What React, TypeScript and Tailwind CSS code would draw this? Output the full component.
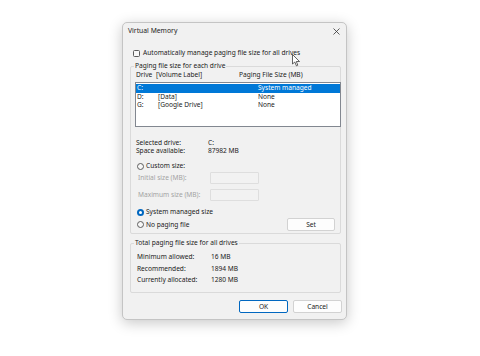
import React from "react";

const font = { fontFamily: '"Segoe UI", "Noto Sans", "Open Sans", sans-serif' };

function Radio({ checked }: { checked?: boolean }) {
  return checked ? (
    <span className="w-[7px] h-[7px] rounded-full bg-[#0067c0] flex items-center justify-center shrink-0">
      <span className="w-[3px] h-[3px] rounded-full bg-white" />
    </span>
  ) : (
    <span className="w-[7px] h-[7px] rounded-full border border-[#5c5c5c] bg-[#f7f7f7] shrink-0" />
  );
}

export default function App() {
  return (
    <div
      className="w-[480px] h-[356px] bg-white overflow-hidden pt-[22px] pl-[122px] text-[6.6px] leading-[8px] text-[#1a1a1a] relative"
      style={font}
    >
      <div className="w-[225px] h-[298px] bg-[#f1f1f1] border border-[#c4c4c4] rounded-[5px] shadow-[0_3px_14px_rgba(0,0,0,0.22)] flex flex-col">
        {/* Title bar */}
        <div className="h-[16px] flex items-center justify-between pl-[5px] pr-[5px]">
          <span className="text-[6.8px]">Virtual Memory</span>
          <svg width="7" height="7" viewBox="0 0 7 7" className="mr-[1px]">
            <path d="M0.5 0.5 L6.5 6.5 M6.5 0.5 L0.5 6.5" stroke="#333" strokeWidth="0.8" />
          </svg>
        </div>
        {/* Checkbox row */}
        <div className="mt-[10px] h-[8px] flex items-center pl-[10px] gap-[3px]">
          <span className="w-[7px] h-[7px] rounded-[1.5px] border border-[#5c5c5c] bg-[#f7f7f7]" />
          <span>Automatically manage paging file size for all drives</span>
        </div>
        {/* Groupbox 1 */}
        <div className="mt-[9px] ml-[7px] w-[211px] h-[168px] border border-[#dadada] rounded-[2px] relative flex flex-col pb-[2px]">
          <span className="absolute left-[3px] top-[-5px] px-[1px] bg-[#f1f1f1] leading-[8px]">
            Paging file size for each drive
          </span>
          <div className="mt-[4px] h-[8px] flex pl-[5px]">
            <span className="w-[20px]">Drive</span>
            <span className="w-[83px]">[Volume Label]</span>
            <span>Paging File Size (MB)</span>
          </div>
          <div className="mt-[3px] ml-[4px] w-[206px] h-[45px] border border-[#828790] bg-white pt-[1px]">
            <div className="h-[8.5px] flex items-center bg-[#0078d7] text-white">
              <span className="w-[122px] pl-[1px]">C:</span>
              <span>System managed</span>
            </div>
            <div className="h-[8.5px] flex items-center">
              <span className="w-[22px] pl-[1px]">D:</span>
              <span className="w-[100px]">[Data]</span>
              <span>None</span>
            </div>
            <div className="h-[8.5px] flex items-center">
              <span className="w-[22px] pl-[1px]">G:</span>
              <span className="w-[100px]">[Google Drive]</span>
              <span>None</span>
            </div>
          </div>
          <div className="mt-[12px] h-[8px] flex pl-[5px]">
            <span className="w-[72px]">Selected drive:</span>
            <span>C:</span>
          </div>
          <div className="h-[8px] flex pl-[5px]">
            <span className="w-[72px]">Space available:</span>
            <span>87982 MB</span>
          </div>
          <div className="mt-[7px] h-[8px] flex items-center pl-[6px] gap-[2px]">
            <Radio />
            <span>Custom size:</span>
          </div>
          <div className="mt-[2px] h-[12px] flex items-center pl-[7px] text-[#a3a3a3]">
            <span className="w-[72px]">Initial size (MB):</span>
            <span className="w-[49px] h-[12px] border border-[#dedede] bg-[#f2f2f2] rounded-[1px]" />
          </div>
          <div className="mt-[5px] h-[12px] flex items-center pl-[7px] text-[#a3a3a3]">
            <span className="w-[72px]">Maximum size (MB):</span>
            <span className="w-[49px] h-[12px] border border-[#dedede] bg-[#f2f2f2] rounded-[1px]" />
          </div>
          <div className="mt-[7px] h-[8px] flex items-center pl-[6px] gap-[2px]">
            <Radio checked />
            <span>System managed size</span>
          </div>
          <div className="mt-[2px] h-[13px] flex items-center pl-[6px] pr-[5px]">
            <div className="flex items-center gap-[2px] flex-1">
              <Radio />
              <span>No paging file</span>
            </div>
            <button className="w-[48px] h-[13px] bg-[#fdfdfd] border border-[#d2d2d2] rounded-[2px] text-[6.6px] leading-[8px]">
              Set
            </button>
          </div>
        </div>
        {/* Groupbox 2 */}
        <div className="mt-[9px] ml-[7px] w-[211px] h-[50px] border border-[#dadada] rounded-[2px] relative flex flex-col pt-[9px]">
          <span className="absolute left-[3px] top-[-5px] px-[1px] bg-[#f1f1f1] leading-[8px]">
            Total paging file size for all drives
          </span>
          <div className="h-[8px] flex pl-[6px]">
            <span className="w-[74px]">Minimum allowed:</span>
            <span>16 MB</span>
          </div>
          <div className="mt-[3.5px] h-[8px] flex pl-[6px]">
            <span className="w-[74px]">Recommended:</span>
            <span>1894 MB</span>
          </div>
          <div className="mt-[3.5px] h-[8px] flex pl-[6px]">
            <span className="w-[74px]">Currently allocated:</span>
            <span>1280 MB</span>
          </div>
        </div>
        {/* Buttons */}
        <div className="mt-[7px] flex justify-end gap-[5px] pr-[4px]">
          <button className="w-[49px] h-[13px] bg-[#fdfdfd] border border-[#0067c0] rounded-[2px] text-[6.6px] leading-[8px]">
            OK
          </button>
          <button className="w-[49px] h-[13px] bg-[#fdfdfd] border border-[#d2d2d2] rounded-[2px] text-[6.6px] leading-[8px]">
            Cancel
          </button>
        </div>
      </div>
      {/* Mouse cursor */}
      <svg
        className="absolute left-[292px] top-[54px]"
        width="9"
        height="13"
        viewBox="0 0 9 13"
      >
        <path
          d="M0.5 0.5 L0.5 10 L2.8 8 L4.4 11.8 L5.8 11.2 L4.3 7.5 L7.5 7.5 Z"
          fill="white"
          stroke="#222"
          strokeWidth="0.7"
          strokeLinejoin="round"
        />
      </svg>
    </div>
  );
}
